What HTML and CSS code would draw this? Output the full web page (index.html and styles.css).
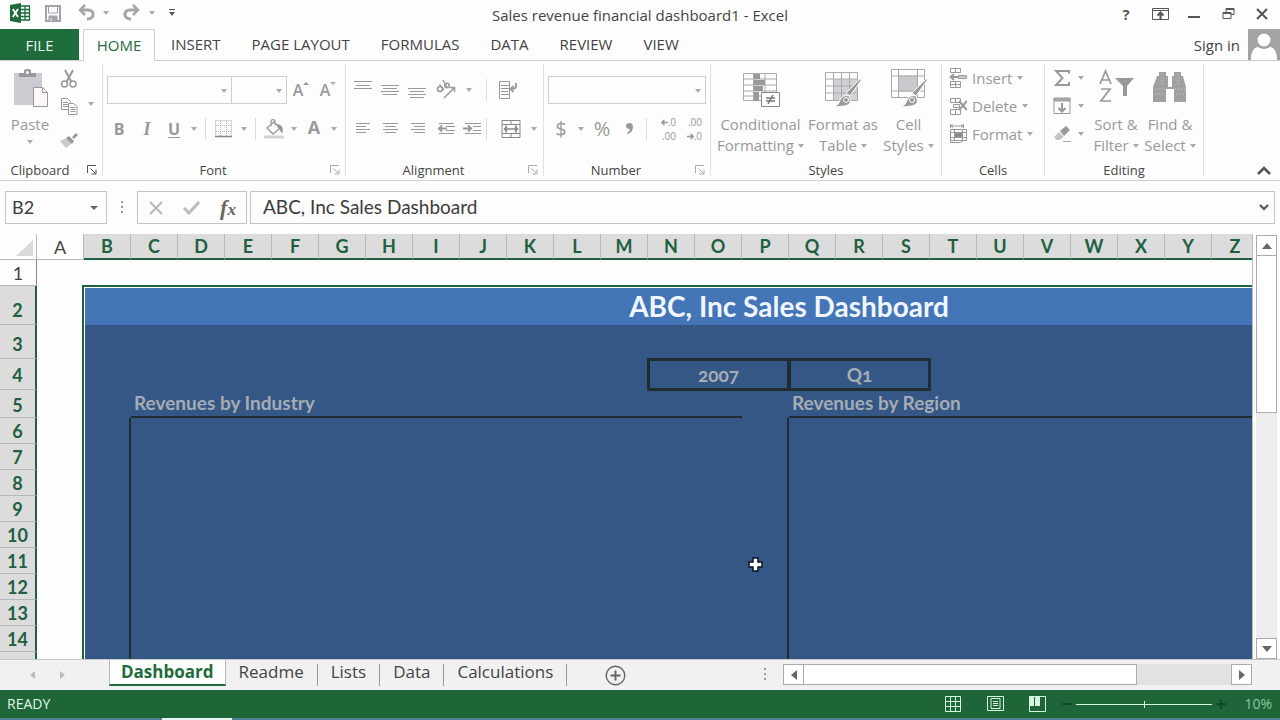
FILE: index.html
```html
<!DOCTYPE html>
<html lang="en">
<head>
<meta charset="utf-8">
<title>Sales revenue financial dashboard1 - Excel</title>
<link rel="stylesheet" href="styles.css">
</head>
<body>
<header class="titlebar">
  <div class="quick">
    <svg class="logo" width="22" height="20" viewBox="0 0 22 20"><path fill="none" stroke="#1e6b3c" stroke-width="1.300" d="M12 3h8.500v14H12M12 6.500h8M12 10h8M12 13.500h8M16 3v14"/><path fill="#1e6b3c" d="M1 2 12 0v20L1 18z"/><path stroke="#fff" stroke-width="1.900" d="M3.800 6 9 14M9 6 3.800 14"/></svg>
    <button class="ib q-save" aria-label="Save"><svg width="18" height="17" viewBox="0 0 18 17" fill="none" stroke="#a3a3ab"><path stroke-width="2" d="M2 1h14v15H2z"/><path d="M4.500 1v7h9V1"/><path fill="#a3a3ab" d="M5 11h8v5H5z"/><path stroke="#fff" d="M7 13v3"/></svg></button>
    <button class="ib q-undo" aria-label="Undo"><svg width="20" height="18" viewBox="0 0 20 18" fill="none" stroke="#a6a6a6" stroke-width="3"><path d="M3 6h8c7 0 7 9-1 9"/><path stroke-width="2.500" d="M8 1 3 6l5 5"/></svg></button>
    <button class="ib q-car" aria-label="Undo list"><i class="caret"></i></button>
    <button class="ib q-redo" aria-label="Redo"><svg width="20" height="18" viewBox="0 0 20 18" fill="none" stroke="#a6a6a6" stroke-width="3"><path d="M17 6H9c-7 0-7 9 1 9"/><path stroke-width="2.500" d="m12 1 5 5-5 5"/></svg></button>
    <button class="ib q-car" aria-label="Redo list"><i class="caret"></i></button>
    <button class="ib q-cust" aria-label="Customize"><svg width="8" height="8" viewBox="0 0 8 8" fill="#555"><path d="M1 0h6v1H1zM1 3h6L4 7z"/></svg></button>
  </div>
  <h1 class="doc">Sales revenue financial dashboard1 - Excel</h1>
  <div class="wins">
    <button class="ib win help" aria-label="Help">?</button>
    <button class="ib win" aria-label="Ribbon display"><svg width="17" height="14" viewBox="0 0 17 14" fill="none" stroke="#555"><path d="M.5 1.500h16v11H.5zM.5 3.500h16"/><path stroke-width="2" d="M8.500 12V6M5.500 8.500l3-3 3 3"/></svg></button>
    <button class="ib win" aria-label="Minimize"><svg width="12" height="14" viewBox="0 0 12 14"><path fill="#555" d="M0 9h12v2H0z"/></svg></button>
    <button class="ib win" aria-label="Restore"><svg width="13" height="13" viewBox="0 0 13 13" fill="none" stroke="#555"><path d="M1 5.500h8v6H1zM1 6.500h8M4 5V1.500h8v6H9M4 2.500h8"/></svg></button>
    <button class="ib win" aria-label="Close"><svg width="12" height="12" viewBox="0 0 12 12" stroke="#555" stroke-width="2"><path d="m1 1 10 10M11 1 1 11"/></svg></button>
  </div>
</header>

<nav class="tabs">
  <button class="file">FILE</button>
  <button class="tab on">HOME</button>
  <button class="tab">INSERT</button>
  <button class="tab">PAGE LAYOUT</button>
  <button class="tab">FORMULAS</button>
  <button class="tab">DATA</button>
  <button class="tab">REVIEW</button>
  <button class="tab">VIEW</button>
  <a class="signin" href="#">Sign in</a>
  <svg class="avatar" width="32" height="31" viewBox="0 0 32 31"><path fill="#a3a3a3" d="M0 0h32v31H0z"/><circle cx="16" cy="11" r="6.500" fill="#fff"/><path fill="#fff" d="M3 31c0-8 2-12 7-13 4 2.500 8 2.500 12 0 5 1 7 5 7 13z"/></svg>
</nav>

<section class="ribbon">
  <div class="group g-clip">
    <div class="body">
      <button class="big paste"><svg width="36" height="40" viewBox="0 0 36 40"><path fill="#cdcbd1" d="M2 4h28v32H2z"/><path fill="#999" d="M7 8V4h5V1q4-2 7 0v3h5v4z"/><circle cx="15.500" cy="3.500" r="1.500" fill="#fff"/><path fill="#fbf7fa" stroke="#999" d="M21.500 18.500h9l5 5v14h-14zM30.500 18.500v5h5"/></svg><span>Paste</span><i class="caret"></i></button>
      <div class="stack">
        <button class="ib" aria-label="Cut"><svg width="18" height="19" viewBox="0 0 18 19" fill="none" stroke="#999" stroke-width="1.500"><path stroke-width="2" d="M5 1l6.500 12M13 1 6.500 13"/><circle cx="4.500" cy="15" r="3"/><circle cx="13" cy="15" r="3"/></svg></button>
        <button class="ib" aria-label="Copy"><svg width="18" height="19" viewBox="0 0 18 19" fill="#fdfdfd" stroke="#999"><path d="M1.500 1.500h6l3 3v8h-9zM3 5.500h5M3 7.500h5M3 9.500h5"/><path d="M8.500 6.500h5l3.500 3v8H8.500zM10.500 10.500h5M10.500 12.500h5M10.500 14.500h5"/></svg></button>
        <button class="ib car" aria-label="Copy options"><i class="caret"></i></button>
        <button class="ib low" aria-label="Format painter"><svg width="18" height="15" viewBox="0 0 18 15"><path fill="#c9c9c9" d="M0 8l7-3 5 5-6 5z"/><path fill="#999" d="M6 5l3-2 5 5-2 3zM12 4l4-4 2 2-4 4z"/></svg></button>
      </div>
    </div>
    <div class="label">Clipboard<button class="launch dark" aria-label="Clipboard options"><svg width="10" height="10" viewBox="0 0 10 10" fill="none" stroke="currentColor"><path d="M.5 8V.5H9M3.500 3.500l5 5M9 4.500V9H4.500"/></svg></button></div>
  </div>

  <div class="group g-font">
    <div class="body rows">
      <div class="row">
        <span class="sel font"><select aria-label="Font" disabled></select></span><span class="sel size"><select aria-label="Font size" disabled></select></span>
        <button class="ib w28 ch up" aria-label="Grow font">A<i class="caret"></i></button><button class="ib w26 ch dn" aria-label="Shrink font">A<i class="caret"></i></button>
      </div>
      <div class="row">
        <button class="ib w28 bold" aria-label="Bold">B</button><button class="ib w28 ital" aria-label="Italic">I</button><button class="ib w26 under" aria-label="Underline">U</button><button class="ib car" aria-label="Underline options"><i class="caret"></i></button><i class="vsep"></i>
        <button class="ib w26" aria-label="Borders"><svg width="18" height="18" viewBox="0 0 18 18" fill="none" stroke="#aaa"><path stroke-dasharray="1 1" d="M.5.5h16v16M.5.5v16M5.500 1v15M11.500 1v15M1 5.500h16M1 11.500h16"/><path stroke="#888" stroke-width="1.500" d="M0 16.500h17"/></svg></button><button class="ib car" aria-label="Border options"><i class="caret"></i></button><i class="vsep"></i>
        <button class="ib w26" aria-label="Fill color"><svg width="20" height="20" viewBox="0 0 20 20" fill="none" stroke="#999" stroke-width="1.300"><path d="M3 9l7-6 6 6-7 6zM7 7V2q2-3 4 0v4"/><path fill="#999" d="M13 6q6 0 5 7l-3-4z"/><path stroke="#d4d2d6" stroke-width="3" d="M0 18h20"/></svg></button><button class="ib car" aria-label="Fill options"><i class="caret"></i></button>
        <button class="ib w26 bold fc" aria-label="Font color">A</button><button class="ib car" aria-label="Font color options"><i class="caret"></i></button>
      </div>
    </div>
    <div class="label">Font<button class="launch" aria-label="Font options"><svg width="10" height="10" viewBox="0 0 10 10" fill="none" stroke="currentColor"><path d="M.5 8V.5H9M3.500 3.500l5 5M9 4.500V9H4.500"/></svg></button></div>
  </div>

  <div class="group g-align">
    <div class="body rows">
      <div class="row">
        <button class="ib w26" aria-label="Top align"><svg width="18" height="18" viewBox="0 0 18 18" stroke="#999"><path d="M0 .5h18M2 4.500h14M0 7.500h18"/></svg></button><button class="ib w28" aria-label="Middle align"><svg width="18" height="18" viewBox="0 0 18 18" stroke="#999"><path d="M0 4.500h18M2 7.500h14M0 10.500h18M2 13.500h14"/></svg></button><button class="ib w26" aria-label="Bottom align"><svg width="18" height="18" viewBox="0 0 18 18" stroke="#999"><path d="M0 7.500h18M2 10.500h14M0 13.500h18M2 16.500h14"/></svg></button>
        <button class="ib w32" aria-label="Orientation"><svg width="20" height="20" viewBox="0 0 20 20" fill="none" stroke="#999" stroke-width="1.500"><circle cx="4" cy="9" r="2.500"/><path d="M3.500 4.500 8 10M7 0l4 7"/><circle cx="11" cy="5.500" r="2.300"/><path d="M8 18 18 8M13.500 7.500h5V12"/></svg></button><button class="ib car" aria-label="Orientation options"><i class="caret"></i></button><i class="vsep gap"></i>
        <button class="ib w32" aria-label="Wrap text"><svg width="20" height="20" viewBox="0 0 20 20" fill="none" stroke="#999"><path d="M1.500 1.500h10v17h-10zM3 5.500h9M3 8.500h8M3 11.500h7M3 14.500h8"/><path stroke-width="1.800" d="M18 3v3q0 3-5 3M15.500 6l-3 3 3 3"/></svg></button>
      </div>
      <div class="row">
        <button class="ib w26" aria-label="Align left"><svg width="16" height="14" viewBox="0 0 16 14" stroke="#999"><path d="M1 1.500h14M1 4.500h10M1 7.500h14M1 10.500h10"/></svg></button><button class="ib w28" aria-label="Center"><svg width="16" height="14" viewBox="0 0 16 14" stroke="#999"><path d="M1 1.500h15M3 4.500h11M1 7.500h15M3 10.500h11"/></svg></button><button class="ib w26" aria-label="Align right"><svg width="16" height="14" viewBox="0 0 16 14" stroke="#999"><path d="M2 1.500h14M5 4.500h11M2 7.500h14M5 10.500h11"/></svg></button>
        <button class="ib w32" aria-label="Decrease indent"><svg width="18" height="14" viewBox="0 0 18 14" stroke="#999"><path d="M2 1.500h15M9 4.500h9M9 8.500h9M2 11.500h15"/><path fill="none" stroke-width="2" d="M10 6.500H2M5 3.500l-3 3 3 3"/></svg></button><button class="ib w20" aria-label="Increase indent"><svg width="18" height="14" viewBox="0 0 18 14" stroke="#999"><path d="M2 1.500h16M10 4.500h8M10 8.500h8M2 11.500h16"/><path fill="none" stroke-width="2" d="M0 6.500h8M5 3.500l3 3-3 3"/></svg></button><i class="vsep end"></i>
        <button class="ib w32" aria-label="Merge and center"><svg width="20" height="19" viewBox="0 0 20 19" fill="none" stroke="#888"><path d="M1 .5h18v17H1zM1 4.500h18M1 13.500h18M10 1v3M10 14v4M5 4.500v9M15 4.500v9"/><path stroke-width="1.600" d="M3 9h14M6 6.500 3.500 9 6 11.500M14 6.500l2.500 2.500-2.500 2.500"/></svg></button><button class="ib car" aria-label="Merge options"><i class="caret"></i></button>
      </div>
    </div>
    <div class="label">Alignment<button class="launch" aria-label="Alignment options"><svg width="10" height="10" viewBox="0 0 10 10" fill="none" stroke="currentColor"><path d="M.5 8V.5H9M3.500 3.500l5 5M9 4.500V9H4.500"/></svg></button></div>
  </div>

  <div class="group g-num">
    <div class="body rows">
      <div class="row"><span class="sel num"><select aria-label="Number format" disabled></select></span></div>
      <div class="row">
        <button class="ib w26 sym" aria-label="Currency">$</button><button class="ib car" aria-label="Currency options"><i class="caret"></i></button><button class="ib w28 sym" aria-label="Percent">%</button><button class="ib w26" aria-label="Comma style"><svg width="7" height="12" viewBox="0 0 7 12" fill="#999"><path d="M0 3q0-3 3.500-3Q7 0 7 4q0 5-5 7l-1-1q3-2 3-4-4 0-4-3z"/></svg></button><i class="vsep"></i>
        <button class="ib w28 dec" aria-label="Increase decimal"><span><svg width="7" height="7" viewBox="0 0 7 7" fill="none" stroke="#999" stroke-width="1.600"><path d="M7 3.500H1M3.500 1 1 3.500 3.500 6"/></svg>.0</span><span>.00</span></button><button class="ib w26 dec" aria-label="Decrease decimal"><span>.00</span><span><svg width="7" height="7" viewBox="0 0 7 7" fill="none" stroke="#999" stroke-width="1.600"><path d="M0 3.500h6M3.500 1 6 3.500 3.500 6"/></svg>.0</span></button>
      </div>
    </div>
    <div class="label">Number<button class="launch" aria-label="Number options"><svg width="10" height="10" viewBox="0 0 10 10" fill="none" stroke="currentColor"><path d="M.5 8V.5H9M3.500 3.500l5 5M9 4.500V9H4.500"/></svg></button></div>
  </div>

  <div class="group g-style">
    <div class="body">
      <button class="big b-cond"><svg width="38" height="40" viewBox="0 0 38 40" fill="none" stroke="#aaa"><path d="M1.500 4.500h33v27h-33zM1 10h33M1 16h33M1 22h33M1 27h33M11.500 4v28M23 4v28"/><path fill="#999" stroke="none" d="M12 5h6v5h-6zM12 11h11v5H12zM12 17h9v5h-9zM12 23h5v9h-5z"/><path fill="#fff" stroke="#888" d="M19.500 23.500h18v14h-18z"/><path stroke="#777" stroke-width="1.500" d="M24 29h9M24 32h9M31 26l-5 9"/></svg><span>Conditional<br>Formatting<i class="caret"></i></span></button>
      <button class="big b-fmt"><svg width="38" height="40" viewBox="0 0 38 40" fill="none" stroke="#aaa"><path fill="#d2d0d4" stroke="none" d="M9 10h24v21H9z"/><path d="M1.500 3.500h32v28h-32zM1 10h33M1 17h33M1 24h33M9.500 3v29M17.500 3v29M25.500 3v29"/><path fill="#999" stroke="#fdfdfd" d="M38 10 26 27l-4-3L36 10zM10 38q6-3 6-7 3-6 9-4 4 8-4 10z"/><circle cx="22" cy="31" r="2.500" stroke="#fff"/></svg><span>Format as<br>Table<i class="caret"></i></span></button>
      <button class="big b-cell"><svg width="38" height="40" viewBox="0 0 38 40" fill="none" stroke="#aaa"><path d="M1.500.5h33v28h-33zM1 7h33M1 22h33M8.500 0v28M27.500 0v28"/><path fill="#cac8cc" d="M8.500 7h19v15h-19z"/><path fill="#999" stroke="#fdfdfd" d="M38 10 26 27l-4-3L36 10zM11 38q6-3 6-7 3-6 9-4 4 8-4 10z"/><circle cx="22" cy="31" r="2.500" stroke="#fff"/></svg><span>Cell<br>Styles<i class="caret"></i></span></button>
    </div>
    <div class="label">Styles</div>
  </div>

  <div class="group g-cells">
    <div class="body list">
      <button class="line"><svg width="18" height="20" viewBox="0 0 18 20" fill="none" stroke="#999"><path d="M1.500.5h10v4h-10zM6.500.5v4M1.500 13.500h10v6h-10zM6.500 13v6M1.500 16.500h10"/><path fill="#ccc" d="M9.500 7.500h8v3h-8z"/><path stroke-width="1.800" d="M9 9H1.500M5 6 1.500 9 5 12"/></svg><span>Insert</span><i class="caret"></i></button>
      <button class="line"><svg width="18" height="20" viewBox="0 0 18 20" fill="none" stroke="#999"><path d="M1.500 2.500h10v4h-10zM6.500 2.500v4M4.500 8.500h6v3h-6zM1.500 13.500h10v5h-10zM6.500 13v5"/><path stroke-width="2" d="m10 5 8 9M18 5l-8 9"/></svg><span>Delete</span><i class="caret"></i></button>
      <button class="line"><svg width="18" height="20" viewBox="0 0 18 20" fill="none" stroke="#999"><path d="M1.500 0v4M14.500 0v4M2 2h12M4 .5 2 2l2 1.500M12 .5 14 2l-2 1.500M1.500 5.500h16v11h-16zM5.500 5.500v11M13.500 5.500v11M1.500 8.500h16M1.500 13.500h16M1.500 16.500v2h10l3-2"/><path fill="#888" d="M6 9h7v4H6z"/></svg><span>Format</span><i class="caret"></i></button>
    </div>
    <div class="label">Cells</div>
  </div>

  <div class="group g-edit">
    <div class="body">
      <div class="list pairs">
        <div class="pair"><button class="ib" aria-label="AutoSum"><svg width="17" height="18" viewBox="0 0 17 18" fill="none" stroke="#999" stroke-width="2"><path d="M15 4.500V2H2l6.500 7L2 16h13v-3"/></svg></button><button class="ib car" aria-label="AutoSum options"><i class="caret"></i></button></div>
        <div class="pair"><button class="ib" aria-label="Fill"><svg width="18" height="18" viewBox="0 0 18 18" fill="none" stroke="#999"><path d="M1 1.500h16v15H1z"/><path fill="#aaa" d="M1 1h16v3H1z"/><path stroke-width="2" d="M9 6v8M5.500 11 9 14.500l3.500-3.500"/></svg></button><button class="ib car" aria-label="Fill options"><i class="caret"></i></button></div>
        <div class="pair"><button class="ib" aria-label="Clear"><svg width="18" height="18" viewBox="0 0 18 18"><path fill="#999" d="m7 6 6-5 4 4-6 6z"/><path fill="#c5c5c5" d="m6 7 4.500 4.500L7 15H3l-2-3z"/><path stroke="#aaa" d="M10 16.500h8"/></svg></button><button class="ib car" aria-label="Clear options"><i class="caret"></i></button></div>
      </div>
      <button class="big b-sort"><svg width="36" height="40" viewBox="0 0 36 40" fill="none" stroke="#999" stroke-width="1.700"><path d="M2 15 7.500 2 13 15M4 11h7M3 20h9L3 32h10"/><path fill="#999" stroke="none" d="M17 9h19l-7 8v10h-4V17z"/></svg><span>Sort &amp;<br>Filter<i class="caret"></i></span></button>
      <button class="big b-find"><svg width="36" height="40" viewBox="0 0 36 40" fill="#a0a0a0"><path d="M7 7V3h7v4h2v11h4V7h2V3h7v4h2l3 11v15H22V20h-8v13H1V18L5 7z"/><path stroke="#ccc" stroke-dasharray="1 2" d="M3 20h10M23 20h10M4 25h8M24 25h8M10 5v12M26 5v12"/></svg><span>Find &amp;<br>Select<i class="caret"></i></span></button>
    </div>
    <div class="label">Editing</div>
  </div>
  <button class="ib collapse" aria-label="Collapse ribbon"><svg width="14" height="9" viewBox="0 0 14 9" fill="none" stroke="#555" stroke-width="2.600"><path d="m1 8 6-6 6 6"/></svg></button>
</section>

<section class="fbar">
  <div class="box name"><input aria-label="Name box" value="B2"><button class="ib" aria-label="Names"><i class="caret dk"></i></button></div>
  <i class="dots"></i>
  <div class="box fx">
    <button class="ib" aria-label="Cancel"><svg width="14" height="14" viewBox="0 0 14 14" stroke="#bbb" stroke-width="2.200"><path d="m1 1 12 12M13 1 1 13"/></svg></button>
    <button class="ib" aria-label="Enter"><svg width="18" height="14" viewBox="0 0 18 14" fill="none" stroke="#bbb" stroke-width="3"><path d="m1 7 5 5L16 1"/></svg></button>
    <button class="ib fn" aria-label="Insert function">f<small>x</small></button>
  </div>
  <div class="box formula"><input aria-label="Formula" value="ABC, Inc Sales Dashboard"><button class="ib" aria-label="Expand"><svg width="10" height="7" viewBox="0 0 10 7" fill="none" stroke="#555" stroke-width="2.200"><path d="m1 1 4 4 4-4"/></svg></button></div>
</section>

<main class="work">
  <div class="sheet">
    <table class="cells">
      <colgroup><col class="rh"><col span="31"></colgroup>
      <thead><tr>
        <th class="corner"><svg width="17" height="16" viewBox="0 0 17 16"><path fill="#d9d9d9" d="M17 0v16H0z"/></svg></th>
        <th class="plain">A</th><th>B</th><th>C</th><th>D</th><th>E</th><th>F</th><th>G</th><th>H</th><th>I</th><th>J</th><th>K</th><th>L</th><th>M</th><th>N</th><th>O</th><th>P</th><th>Q</th><th>R</th><th>S</th><th>T</th><th>U</th><th>V</th><th>W</th><th>X</th><th>Y</th><th>Z</th><th colspan="5"></th>
      </tr></thead>
      <tbody>
        <tr class="r1"><th class="plain">1</th><td colspan="31"></td></tr>
        <tr class="r2"><th>2</th><td rowspan="14"></td><td class="title" colspan="30">ABC, Inc Sales Dashboard</td></tr>
        <tr class="r3"><th>3</th><td class="bg" colspan="30"></td></tr>
        <tr class="r4"><th>4</th><td class="bg" colspan="12"></td><td class="bg pick" colspan="3">2007</td><td class="bg pick" colspan="3">Q1</td><td class="bg" colspan="12"></td></tr>
        <tr class="r5"><th>5</th><td class="bg"></td><td class="bg head" colspan="13">Revenues by Industry</td><td class="bg"></td><td class="bg head" colspan="15">Revenues by Region</td></tr>
        <tr><th>6</th><td class="bg edge" rowspan="10"></td><td class="bg" colspan="13" rowspan="10"></td><td class="bg edge" rowspan="10"></td><td class="bg" colspan="15" rowspan="10"></td></tr>
        <tr><th>7</th></tr><tr><th>8</th></tr><tr><th>9</th></tr><tr><th>10</th></tr><tr><th>11</th></tr><tr><th>12</th></tr><tr><th>13</th></tr><tr><th>14</th></tr><tr><th></th></tr>
      </tbody>
    </table>
    <div class="selection"></div>
    <svg class="cursor" width="15" height="15" viewBox="0 0 15 15"><path fill="#fff" stroke="#0b1320" stroke-width="1.500" d="M5 1h5v4h4v5h-4v4H5v-4H1V5h4z"/></svg>
  </div>
  <div class="vbar">
    <button class="sb" aria-label="Scroll up"><i class="tri up"></i></button>
    <div class="vtrack"><div class="vthumb"></div></div>
    <button class="sb" aria-label="Scroll down"><i class="tri down"></i></button>
  </div>
</main>

<nav class="sheets">
  <div class="nav"><button class="ib" aria-label="Previous sheet"><i class="tri left pale"></i></button><button class="ib" aria-label="Next sheet"><i class="tri right pale"></i></button></div>
  <button class="stab on">Dashboard</button>
  <button class="stab">Readme</button>
  <button class="stab">Lists</button>
  <button class="stab">Data</button>
  <button class="stab">Calculations</button>
  <button class="ib add" aria-label="New sheet"><svg width="21" height="21" viewBox="0 0 21 21" fill="none" stroke="#666"><circle cx="10.500" cy="10.500" r="9.300" stroke-width="1.400"/><path stroke-width="2" d="M10.500 5.500v10M5.500 10.500h10"/></svg></button>
  <i class="dots"></i>
  <div class="hbar">
    <button class="sb" aria-label="Scroll left"><i class="tri left"></i></button>
    <div class="htrack"><div class="hthumb"></div></div>
    <button class="sb" aria-label="Scroll right"><i class="tri right"></i></button>
  </div>
</nav>

<footer class="status">
  <span class="ready">READY</span>
  <button class="ib view" aria-label="Normal view"><svg width="16" height="16" viewBox="0 0 16 16" fill="none" stroke="#d5f5df"><path d="M.5.5h15v15H.5zM5.500 0v16M10.500 0v16M0 5.500h16M0 10.500h16"/></svg></button>
  <button class="ib view" aria-label="Page layout view"><svg width="17" height="16" viewBox="0 0 17 16" fill="none" stroke="#d5f5df"><path d="M.5.500h16v14H.5zM4 2.500h9v10H4zM6 5.500h5M6 7.500h5M6 9.500h5"/></svg></button>
  <button class="ib view" aria-label="Page break view"><svg width="17" height="16" viewBox="0 0 17 16" fill="none" stroke="#d5f5df"><path d="M.5.500h16v15H.5z"/><path fill="#d5f5df" stroke="none" d="M0 0h5v10H0zM6 0h5v10H6z"/></svg></button>
  <button class="ib zo" aria-label="Zoom out">−</button>
  <input class="zoom" type="range" aria-label="Zoom" min="10" max="400" value="205">
  <button class="ib zo" aria-label="Zoom in">+</button>
  <span class="pct">10%</span>
</footer>
<div class="desk"><i></i></div>
</body>
</html>
```
FILE: styles.css
```css
* { box-sizing: border-box; }
body {
  margin: 0; height: 100vh; display: flex; flex-direction: column; overflow: hidden;
  background: #fdfdfd; color: #444; font: 15px/20px "Open Sans", "Noto Sans", sans-serif;
}
button, input, select { font: inherit; color: inherit; margin: 0; padding: 0; border: 0; background: none; border-radius: 0; }
svg { display: block; flex: none; }
i { display: block; font-style: normal; }
a { color: inherit; text-decoration: none; }
.ib { display: flex; align-items: center; justify-content: center; flex: none; }
.caret { width: 0; height: 0; border: 3px solid transparent; border-top: 4px solid #aaa; border-bottom: 0; flex: none; }
.caret.dk { border-width: 4px 4px 0; border-top-color: #666; }
.w20 { width: 20px; } .w26 { width: 26px; } .w28 { width: 28px; } .w32 { width: 32px; } .car { width: 14px; height: 24px; }

/* Title bar */
.titlebar { display: grid; grid-template-columns: 1fr auto 1fr; height: 29px; flex: none; align-items: center; }
.quick { display: flex; align-items: center; padding: 0 0 3px 9px; }
.q-save { width: 44px; } .q-undo { width: 24px; } .q-car { width: 14px; } .q-redo { width: 32px; padding-left: 4px; } .q-cust { width: 26px; }
.doc { margin: 0; font-size: 15px; font-weight: 400; }
.wins { display: flex; justify-content: flex-end; padding: 0 1px 2px 0; }
.win { width: 34px; height: 26px; }
.help { font-weight: 700; color: #555; }

/* Ribbon tabs */
.tabs { display: flex; gap: 1px; height: 32px; flex: none; border-bottom: 1px solid #cfcfcf; }
.file { width: 79px; margin-right: 3px; background: #1e6b3c; color: #e8f8ee; }
.tab { padding: 0 15px 2px; }
.tab.on { width: 72px; padding: 0 0 2px; height: 32px; border: 1px solid #cfcfcf; border-bottom: 0; background: #fdfdfd; color: #1e6b3c; }
.signin { margin-left: auto; padding: 6px 7px 0 0; }

/* Ribbon */
.ribbon { display: flex; height: 120px; flex: none; padding-top: 3px; border-bottom: 1px solid #d0d0d0; color: #999; }
.group { display: flex; flex-direction: column; height: 112px; flex: none; border-right: 1px solid #e0e0e0; }
.g-clip { width: 103px; } .g-font { width: 243px; } .g-align { width: 198px; } .g-num { width: 167px; }
.g-style { width: 231px; } .g-cells { width: 103px; } .g-edit { width: 159px; }
.body { display: flex; height: 96px; flex: none; }
.label { display: flex; align-items: center; justify-content: center; height: 20px; color: #444; font-size: 13px; padding-right: 22px; position: relative; }
.g-style .label, .g-cells .label, .g-edit .label { padding: 0; }
.launch { position: absolute; right: 5px; top: 5px; color: #aaa; }
.launch.dark { color: #555; }
.rows { flex-direction: column; gap: 11px; padding: 12px 2px 0; }
.row { display: flex; height: 28px; align-items: center; }
.vsep { width: 1px; height: 22px; margin: 0 5px 0 4px; background: #dcdcdc; }
.vsep.gap { margin-left: 10px; }
.vsep.end { margin: 0 8px 0 4px; }
.sel { position: relative; height: 28px; border: 1px solid #cfcfcf; }
.sel select { width: 100%; height: 100%; appearance: none; opacity: 1; display: block; }
.sel::after { content: ""; position: absolute; right: 4px; top: 12px; border: 3px solid transparent; border-top: 4px solid #aaa; border-bottom: 0; }
.sel.font { width: 125px; margin-left: 2px; } .sel.size { width: 56px; margin-left: -1px; } .sel.num { width: 158px; margin-left: 2px; }
.ch { font-size: 16px; font-weight: 600; align-items: flex-start; }
.ch .caret { border-width: 3px 3px 0; margin-top: 2px; }
.ch.up .caret { border-width: 0 3px 3px; border-bottom: 3px solid #999; }
.bold { font-weight: 700; font-size: 16px; }
.fc { font-size: 18px; padding-bottom: 4px; }
.ital { font: italic 700 18px "Liberation Serif", serif; }
.under { font-weight: 700; font-size: 16px; text-decoration: underline; text-underline-offset: 2px; }
.sym { font-size: 20px; }
.dec { flex-direction: column; font-size: 10px; line-height: 14px; align-items: flex-end; padding-right: 4px; }
.dec span { display: flex; align-items: center; }
.g-align .rows { padding-left: 4px; }
.g-num .rows { padding-left: 4px; }
.g-num .sel { margin-left: 0; }

.big { display: flex; flex-direction: column; align-items: center; line-height: 21px; padding-top: 5px; gap: 5px; white-space: nowrap; }
.big span .caret { display: inline-block; margin: 0 0 3px 4px; }
.paste { width: 54px; padding-left: 6px; }
.stack { display: grid; grid-template-columns: 30px 14px; grid-auto-rows: 28px; }
.stack > :first-child { grid-column: 1; } .stack > :nth-child(2) { grid-row: 2; } .stack > .car { grid-row: 2; grid-column: 2; }
.stack .low { grid-row: 3; align-items: flex-end; }
.b-cond { width: 99px; } .b-fmt { width: 66px; } .b-cell { width: 65px; }
.list { display: flex; flex-direction: column; }
.line { display: flex; align-items: center; height: 28px; padding-left: 7px; gap: 5px; }
.pairs { width: 46px; } .pair { display: flex; height: 28px; align-items: center; padding-left: 8px; } .pair > :first-child { width: 18px; margin-right: 3px; }
.b-sort { width: 50px; } .b-find { width: 58px; }
.collapse { margin: auto 9px 5px auto; }

/* Formula bar */
.fbar { display: flex; align-items: stretch; flex: none; height: 53px; padding: 10px 5px 10px 5px; font: 18px/24px Lato, sans-serif; color: #3c3c3c; }
.box { display: flex; border: 1px solid #c3c3c3; align-items: center; }
.box input { min-width: 0; flex: 1; height: 100%; outline: 0; padding-bottom: 2px; }
.name { width: 102px; padding-left: 6px; } .name .ib { width: 24px; height: 100%; }
.dots { width: 2px; height: 14px; align-self: center; background: repeating-linear-gradient(#999 0 2px, transparent 2px 5px); }
.fbar .dots { margin: 0 14px; }
.fx { width: 110px; margin-right: 3px; } .fx .ib { flex: 1; }
.fn { font: italic 700 22px "Liberation Serif", serif; color: #666; } .fn small { font-size: 17px; padding-top: 4px; }
.formula { flex: 1; padding-left: 12px; font-size: 19px; } .formula .ib { width: 20px; }

/* Worksheet */
.work { display: flex; flex: 1; min-height: 0; }
.sheet { flex: 1; min-width: 0; position: relative; overflow: hidden; border-right: 1px solid #bbb; }
.cells { table-layout: fixed; width: 1494px; border-collapse: separate; border-spacing: 0; font: 18px/20px Lato, sans-serif; }
.cells col { width: 47px; } .cells col.rh { width: 37px; }
.cells th, .cells td { padding: 0; }
.cells tr { height: 26px; }
.cells .r2 { height: 39px; } .cells .r3 { height: 34px; } .cells .r4 { height: 31px; } .cells .r5 { height: 28px; }
.cells th { background: #dcdcdc; color: #1e6040; font-weight: 700; }
.cells thead th { border-bottom: 2px solid #1e6040; border-right: 1px solid #b8b8b8; }
.cells thead .plain, .cells thead .corner { border-bottom: 1px solid #b8b8b8; }
.cells tbody th { border-right: 2px solid #1e6040; border-bottom: 1px solid #b8b8b8; vertical-align: bottom; padding-bottom: 2px; }
.cells .r2 th, .cells .r3 th, .cells .r4 th { padding-bottom: 4px; }
.cells tbody .plain { border-right: 1px solid #888; }
.cells .plain, .cells .corner { background: #fdfdfd; color: #444; font-weight: 400; }
.corner svg { margin: 3px 0 0 16px; }
.cells .title { background: #4475b6; color: #f0f6ff; font-weight: 700; font-size: 28px; line-height: 30px; text-align: center; }
.cells .bg { background: #345786; color: #a5acb4; font-weight: 700; font-size: 19px; }
.cells .pick { text-align: center; outline: 3px solid #1f2c30; outline-offset: -2px; font-feature-settings: "onum"; position: relative; }
.cells .head { border-bottom: 2px solid #1f2c30; padding-left: 3px; }
.cells .edge { border-right: 2px solid #1f2c30; }
.selection { position: absolute; left: 82px; top: 51px; right: -9px; bottom: -9px; border: 2px solid #1e6040; box-shadow: inset 0 0 0 1px #fff; }
.cursor { position: absolute; left: 748px; top: 323px; }

.sb { width: 21px; height: 21px; flex: none; display: flex; align-items: center; justify-content: center; background: #fff; border: 1px solid #ababab; }
.tri { width: 0; height: 0; border: 5px solid transparent; }
.tri.up { border-top: 0; border-bottom: 6px solid #666; } .tri.down { border-bottom: 0; border-top: 6px solid #666; }
.tri.left { border-left: 0; border-right: 6px solid #666; } .tri.right { border-right: 0; border-left: 6px solid #666; }
.tri.left.pale { border-width: 4px 5px 4px 0; border-right-color: #bbb; } .tri.right.pale { border-width: 4px 0 4px 5px; border-left-color: #bbb; }
.vbar { width: 27px; display: flex; flex-direction: column; padding: 1px 3px 0 3px; }
.vtrack { flex: 1; background: #ededed; }
.vthumb { height: 41%; background: #fff; border: 1px solid #ababab; border-top: 0; }

/* Sheet tabs */
.sheets { display: flex; height: 31px; flex: none; background: #f1f1f1; border-top: 1px solid #c8c8c8; font-size: 17px; }
.nav { display: flex; width: 109px; padding-left: 17px; } .nav .ib { width: 30px; }
.stab { height: 26px; padding: 0 14px 2px 13px; position: relative; }
.stab:not(.on)::after { content: ""; position: absolute; right: 0; top: 4px; height: 22px; border-right: 1px solid #999; }
.stab.on { background: #fff; color: #1e6b3c; font-weight: 700; border: 1px solid #bbb; border-top: 0; border-bottom: 2px solid #1e6b3c; padding: 0 11px; }
.add { margin-left: 38px; }
.sheets .dots { margin: 0 17px 0 auto; }
.hbar { display: flex; width: 469px; margin: 4px 28px 0 0; height: 21px; }
.htrack { flex: 1; background: #e3e3e3; } .hthumb { width: 78%; height: 100%; background: #fff; border: 1px solid #ababab; border-left: 0; }

/* Status bar */
.status { display: flex; align-items: center; height: 28px; flex: none; background: #1e6638; color: #e0f5e8; font-size: 14px; padding-right: 8px; }
.ready { margin: 0 auto 0 7px; }
.view { width: 42px; }
.zo { width: 18px; font-size: 20px; font-weight: 700; color: #124a28; }
.zoom { appearance: none; width: 136px; height: 14px; background: linear-gradient(#d5f5df, #d5f5df) center / 100% 1px no-repeat; }
.zoom::-webkit-slider-thumb { appearance: none; width: 1px; height: 7px; background: #d5f5df; }
.pct { color: #8fc3a2; width: 42px; text-align: right; }
.desk { height: 2px; flex: none; background: #4f8296; } .desk i { width: 70px; height: 2px; margin-left: 162px; background: #e8f4f0; }
```
